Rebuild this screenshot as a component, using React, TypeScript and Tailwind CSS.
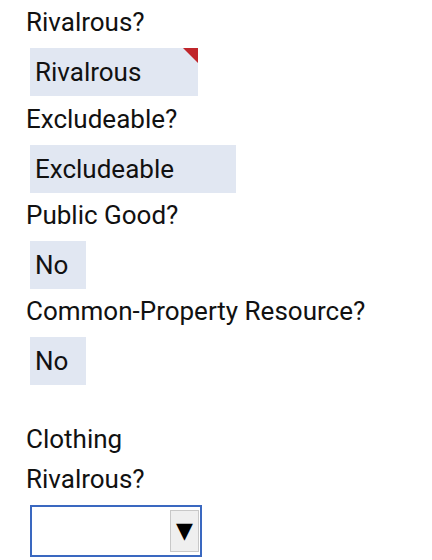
import React from 'react';

const Label: React.FC<{ children: React.ReactNode }> = ({ children }) => (
  <div className="h-12 pl-[26px] pt-[6px] text-[26px] leading-8 text-[#111]">{children}</div>
);

const Answer: React.FC<{ children: React.ReactNode; w: string; flag?: boolean }> = ({ children, w, flag }) => (
  <div className="pl-[30px]">
    <div className={`relative flex h-12 items-center bg-[#e1e7f2] pl-[5px] text-[26px] text-[#111] ${w}`}>
      {children}
      {flag && (
        <div className="absolute right-0 top-0 h-0 w-0 border-l-[15px] border-t-[15px] border-l-transparent border-t-[#c0262b]" />
      )}
    </div>
  </div>
);

export default function App() {
  return (
    <div className="w-[432px] h-[560px] overflow-hidden bg-white font-['Roboto',sans-serif]">
      <Label>Rivalrous?</Label>
      <Answer w="w-[168px]" flag>Rivalrous</Answer>
      <div className="mt-px">
        <Label>Excludeable?</Label>
      </div>
      <Answer w="w-[206px]">Excludeable</Answer>
      <Label>Public Good?</Label>
      <Answer w="w-[56px]">No</Answer>
      <Label>Common-Property Resource?</Label>
      <Answer w="w-[56px]">No</Answer>
      <div className="h-[32px]" />
      <Label>Clothing</Label>
      <div className="-mt-[8px]">
        <Label>Rivalrous?</Label>
      </div>
      <div className="pl-[30px]">
        <div className="flex h-[52px] w-[172px] items-center justify-end border-2 border-[#3a68c0] bg-white pr-[1px]">
          <div className="flex h-[42px] w-[29px] items-center justify-center border border-[#c8c8c8] bg-[#efefef] font-['DejaVu_Sans',sans-serif] text-[22px] leading-none text-black">
            ▼
          </div>
        </div>
      </div>
    </div>
  );
}
